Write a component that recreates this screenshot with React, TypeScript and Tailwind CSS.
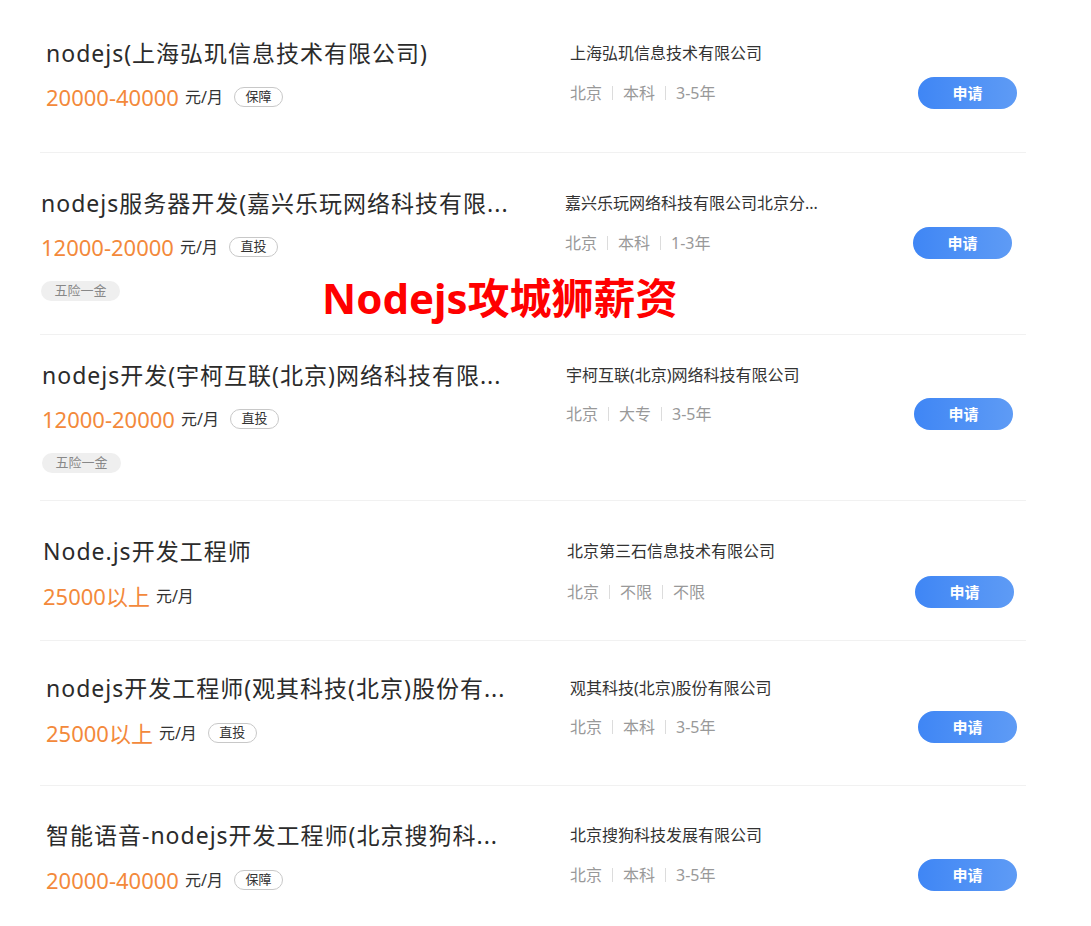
import React from "react";

type Row = {
  title: string;
  salary: string;
  tag?: string;
  welfare?: boolean;
  company: string;
  meta: string[];
  rowCls: string;
  gapCls: string;
  midGapCls: string;
};

const rows: Row[] = [
  {
    title: "nodejs(上海弘玑信息技术有限公司)",
    salary: "20000-40000",
    tag: "保障",
    company: "上海弘玑信息技术有限公司",
    meta: ["北京", "本科", "3-5年"],
    rowCls: "h-[152px] pl-[46px] pt-[37px]",
    gapCls: "mt-[12px]",
    midGapCls: "mt-[8px]",
  },
  {
    title: "nodejs服务器开发(嘉兴乐玩网络科技有限...",
    salary: "12000-20000",
    tag: "直投",
    welfare: true,
    company: "嘉兴乐玩网络科技有限公司北京分...",
    meta: ["北京", "本科", "1-3年"],
    rowCls: "h-[181px] pl-[41px] pt-[34px]",
    gapCls: "mt-[12px]",
    midGapCls: "mt-[8px]",
  },
  {
    title: "nodejs开发(宇柯互联(北京)网络科技有限...",
    salary: "12000-20000",
    tag: "直投",
    welfare: true,
    company: "宇柯互联(北京)网络科技有限公司",
    meta: ["北京", "大专", "3-5年"],
    rowCls: "h-[165px] pl-[42px] pt-[24px]",
    gapCls: "mt-[12px]",
    midGapCls: "mt-[7px]",
  },
  {
    title: "Node.js开发工程师",
    salary: "25000以上",
    company: "北京第三石信息技术有限公司",
    meta: ["北京", "不限", "不限"],
    rowCls: "h-[139px] pl-[43px] pt-[34px]",
    gapCls: "mt-[13px]",
    midGapCls: "mt-[9px]",
  },
  {
    title: "nodejs开发工程师(观其科技(北京)股份有...",
    salary: "25000以上",
    tag: "直投",
    company: "观其科技(北京)股份有限公司",
    meta: ["北京", "本科", "3-5年"],
    rowCls: "h-[144px] pl-[46px] pt-[31px]",
    gapCls: "mt-[13px]",
    midGapCls: "mt-[7px]",
  },
  {
    title: "智能语音-nodejs开发工程师(北京搜狗科...",
    salary: "20000-40000",
    tag: "保障",
    company: "北京搜狗科技发展有限公司",
    meta: ["北京", "本科", "3-5年"],
    rowCls: "h-[140px] pl-[46px] pt-[33px]",
    gapCls: "mt-[13px]",
    midGapCls: "mt-[8px]",
  },
];

function JobRow({ r, last }: { r: Row; last: boolean }) {
  return (
    <>
      <div className={"flex items-start " + r.rowCls}>
        <div className="w-[524px] shrink-0">
          <div className="h-[32px] leading-[32px] text-[23px] tracking-[1px] text-[#2b2b2b] whitespace-nowrap">
            {r.title}
          </div>
          <div className={"flex h-[32px] items-center " + r.gapCls}>
            <span className="text-[22px] text-[#f3893b] leading-[32px]">{r.salary}</span>
            <span className="ml-[6px] text-[16px] text-[#333] leading-[32px]">元/月</span>
            {r.tag && (
              <span className="ml-[11px] flex h-[20px] w-[49px] items-center justify-center rounded-full border border-[#c8c8c8] text-[13px] text-[#333]">
                {r.tag}
              </span>
            )}
          </div>
          {r.welfare && (
            <div className="mt-[18px] flex h-[20px] w-[79px] items-center justify-center rounded-full bg-[#efefef] text-[13px] text-[#888]">
              五险一金
            </div>
          )}
        </div>
        <div className="w-[348px] shrink-0">
          <div className="h-[32px] leading-[32px] text-[16px] text-[#333] whitespace-nowrap">{r.company}</div>
          <div className={"flex h-[32px] items-center text-[16px] text-[#999] " + r.midGapCls}>
            {r.meta.map((m, i) => (
              <React.Fragment key={i}>
                {i > 0 && <span className="mx-[10px] h-[14px] w-px bg-[#dcdcdc]" />}
                <span>{m}</span>
              </React.Fragment>
            ))}
          </div>
        </div>
        <div className={r.midGapCls + " pt-[32px]"}>
          <button className="flex h-[32px] w-[99px] items-center justify-center rounded-full bg-gradient-to-r from-[#3f86f5] to-[#5e9bf5] text-[15px] font-semibold text-white">
            申请
          </button>
        </div>
      </div>
      {!last && <div className="ml-[40px] h-px w-[986px] bg-[#f1f1f1]" />}
    </>
  );
}

export default function App() {
  return (
    <div
      className="relative h-[926px] w-[1091px] overflow-hidden bg-white"
      style={{ fontFamily: '"Noto Sans", "Noto Sans CJK SC", sans-serif' }}
    >
      {rows.map((r, i) => (
        <JobRow key={i} r={r} last={i === rows.length - 1} />
      ))}
      <div className="absolute left-[322px] top-[272px] text-[42px] font-bold leading-[52px] text-[#ff0000] whitespace-nowrap">
        Nodejs攻城狮薪资
      </div>
    </div>
  );
}
